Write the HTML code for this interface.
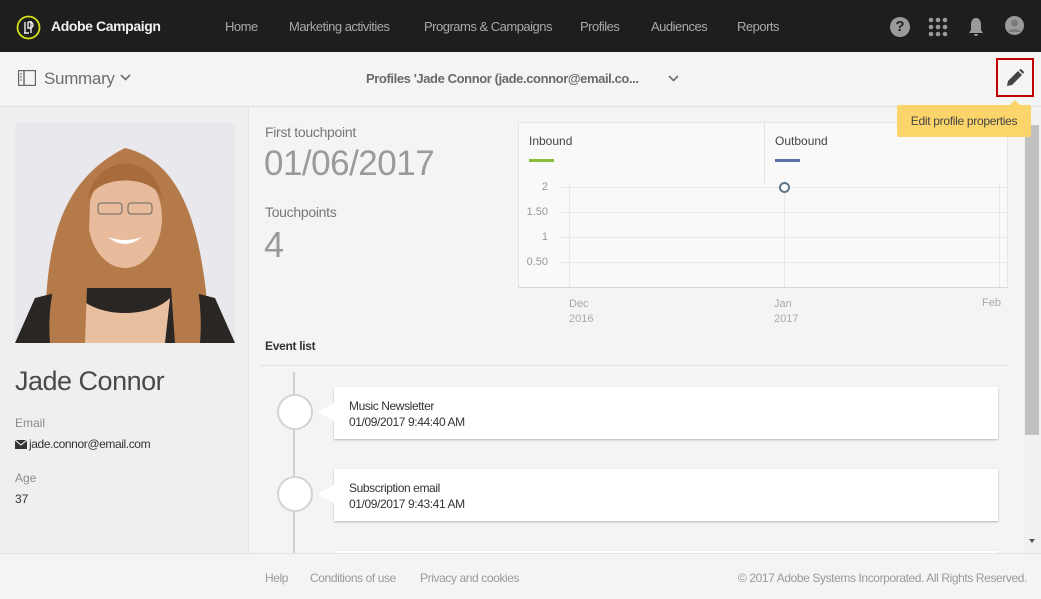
<!DOCTYPE html>
<html><head><meta charset="utf-8"><style>
*{margin:0;padding:0;box-sizing:border-box}
body{width:1041px;height:599px;overflow:hidden;font-family:"Liberation Sans",sans-serif;background:#f4f4f4;position:relative;color:#4b4b4b}
.a{position:absolute;white-space:nowrap}
.top{left:0;top:0;width:1041px;height:52px;background:#1e1e1e}
.nav{top:19px;font-size:13px;color:#a9a9a9;letter-spacing:-0.5px}
.sub{left:0;top:52px;width:1041px;height:55px;background:#f4f4f4;border-bottom:1px solid #e1e1e1}
.left{left:0;top:107px;width:249px;height:446px;background:#efefef;border-right:1px solid #e3e3e3}
.card{background:#fff;box-shadow:0 1px 2px rgba(0,0,0,.25)}
.grid{background:#e8e8e8}
.f{font-size:12px;color:#9a9a9a;letter-spacing:-0.4px;top:571px}
</style></head><body>
<div class="a top"></div>
<svg class="a" style="left:16px;top:15px" width="25" height="25" viewBox="0 0 25 25"><circle cx="12.5" cy="12.5" r="11" fill="none" stroke="#d4e21a" stroke-width="1.8"/><path d="M9 7v11M12 7h2a3 3 0 0 1 0 6h-2v-6M15 6v12M8 18h5" stroke="#eee" stroke-width="1.4" fill="none"/></svg>
<div class="a" style="left:51px;top:18px;font-size:14px;font-weight:bold;color:#f0f0f0;letter-spacing:-0.4px">Adobe Campaign</div>
<div class="a nav" style="left:225px">Home</div>
<div class="a nav" style="left:289px">Marketing activities</div>
<div class="a nav" style="left:424px">Programs &amp; Campaigns</div>
<div class="a nav" style="left:580px">Profiles</div>
<div class="a nav" style="left:651px">Audiences</div>
<div class="a nav" style="left:737px">Reports</div>
<div class="a" style="left:890px;top:17px;width:20px;height:20px;border-radius:50%;background:#9a9a9a;color:#1e1e1e;font-weight:bold;font-size:15px;text-align:center;line-height:20px">?</div>
<svg class="a" style="left:928px;top:17px" width="20" height="20"><g fill="#9a9a9a"><circle cx="3" cy="3" r="2.3"/><circle cx="10" cy="3" r="2.3"/><circle cx="17" cy="3" r="2.3"/><circle cx="3" cy="10" r="2.3"/><circle cx="10" cy="10" r="2.3"/><circle cx="17" cy="10" r="2.3"/><circle cx="3" cy="17" r="2.3"/><circle cx="10" cy="17" r="2.3"/><circle cx="17" cy="17" r="2.3"/></g></svg>
<svg class="a" style="left:967px;top:16px" width="18" height="21"><path d="M9 2c-4 0-5 4-5 7v5l-2 3h14l-2-3V9c0-3-1-7-5-7z M7 18a2 2 0 0 0 4 0z" fill="#9a9a9a"/></svg>
<svg class="a" style="left:1005px;top:16px" width="19" height="19"><circle cx="9.5" cy="9.5" r="9.5" fill="#9a9a9a"/><circle cx="9.5" cy="7" r="3.5" fill="#7a7a7a"/><path d="M3 16c2-4 11-4 13 0" fill="#7a7a7a"/></svg>

<div class="a sub"></div>
<svg class="a" style="left:18px;top:70px" width="18" height="16"><rect x="0.5" y="0.5" width="17" height="15" fill="none" stroke="#666" stroke-width="1.4"/><line x1="6" y1="1" x2="6" y2="15" stroke="#666" stroke-width="1.4"/><path d="M2 4h2M2 7h2M2 10h2" stroke="#666"/></svg>
<div class="a" style="left:44px;top:69px;font-size:17px;color:#6e6e6e;letter-spacing:-0.3px">Summary</div>
<svg class="a" style="left:120px;top:74px" width="11" height="8"><path d="M1 1l4.5 4.5L10 1" stroke="#6e6e6e" stroke-width="1.6" fill="none"/></svg>
<div class="a" style="left:366px;top:71px;font-size:13px;font-weight:bold;color:#6a6a6a;letter-spacing:-0.4px">Profiles 'Jade Connor (jade.connor@email.co...</div>
<svg class="a" style="left:668px;top:75px" width="11" height="8"><path d="M1 1l4.5 4.5L10 1" stroke="#6e6e6e" stroke-width="1.6" fill="none"/></svg>
<div class="a" style="left:996px;top:58px;width:38px;height:39px;border:2px solid #c00000;background:#f4f4f4"></div>
<svg class="a" style="left:1005px;top:68px" width="20" height="20"><path d="M2 18l1-5L13 3l4 4L7 17z" fill="#444"/><path d="M14 2l2-1 3 3-1 2z" fill="#444"/></svg>

<div class="a left"></div>
<div class="a" style="left:15px;top:123px;width:220px;height:220px;background:#ececef;overflow:hidden">
<svg width="220" height="220"><rect width="220" height="220" fill="#e9e8ec"/><path d="M30 220c0-90 10-160 80-195 65 15 80 100 85 195z" fill="#b47a4a"/><path d="M0 220l20-45 40-10 100 0 40 10 20 45z" fill="#2a2624"/><path d="M65 175c20 20 70 20 90 0l-5 45H70z" fill="#e8c0a0"/><ellipse cx="110" cy="95" rx="37" ry="50" fill="#e7bb9b"/><path d="M72 80c5-50 70-55 76 0c-5-30-70-30-76 0z" fill="#a86c3c"/><rect x="83" y="80" width="24" height="11" rx="3" fill="none" stroke="#666"/><rect x="113" y="80" width="24" height="11" rx="3" fill="none" stroke="#666"/><path d="M93 114q17 14 34 0q-17 6-34 0z" fill="#fff"/><path d="M35 220c-5-60 20-110 40-140l-5 140zM185 220c5-60-15-110-35-140l10 140z" fill="#b47a4a"/></svg></div>
<div class="a" style="left:15px;top:366px;font-size:27px;color:#4a4a4a;letter-spacing:-0.5px">Jade Connor</div>
<div class="a" style="left:15px;top:416px;font-size:12px;color:#8a8a8a">Email</div>
<svg class="a" style="left:15px;top:440px" width="12" height="9"><rect width="12" height="9" fill="#333"/><path d="M0 0l6 5 6-5" stroke="#fff" fill="none"/></svg>
<div class="a" style="left:29px;top:437px;font-size:12px;color:#333;letter-spacing:-0.4px">jade.connor@email.com</div>
<div class="a" style="left:15px;top:471px;font-size:12px;color:#8a8a8a">Age</div>
<div class="a" style="left:15px;top:492px;font-size:12px;color:#333">37</div>

<div class="a" style="left:265px;top:124px;font-size:14px;color:#777;letter-spacing:-0.3px">First touchpoint</div>
<div class="a" style="left:264px;top:144px;font-size:35px;color:#9a9a9a;letter-spacing:-0.5px">01/06/2017</div>
<div class="a" style="left:265px;top:204px;font-size:14px;color:#777;letter-spacing:-0.3px">Touchpoints</div>
<div class="a" style="left:264px;top:224px;font-size:36px;color:#9a9a9a">4</div>

<div class="a" style="left:518px;top:122px;width:490px;height:166px;background:#f9f9f9;border:1px solid #e5e5e5;border-bottom:1px solid #d8d8d8"></div>
<div class="a" style="left:764px;top:123px;width:1px;height:60px;background:#e3e3e3"></div>
<div class="a" style="left:529px;top:134px;font-size:12px;color:#444">Inbound</div>
<div class="a" style="left:529px;top:159px;width:25px;height:3px;background:#8bbd3c"></div>
<div class="a" style="left:775px;top:134px;font-size:12px;color:#444">Outbound</div>
<div class="a" style="left:775px;top:159px;width:25px;height:3px;background:#5a6ea8"></div>
<div class="a grid" style="left:560px;top:187px;width:448px;height:1px"></div>
<div class="a grid" style="left:560px;top:212px;width:448px;height:1px"></div>
<div class="a grid" style="left:560px;top:237px;width:448px;height:1px"></div>
<div class="a grid" style="left:560px;top:262px;width:448px;height:1px"></div>
<div class="a grid" style="left:569px;top:183px;width:1px;height:104px"></div>
<div class="a grid" style="left:784px;top:183px;width:1px;height:104px"></div>
<div class="a grid" style="left:999px;top:183px;width:1px;height:104px"></div>
<div class="a" style="left:779px;top:182px;width:11px;height:11px;border-radius:50%;border:2px solid #5f7689;background:#fff"></div>
<div class="a" style="left:528px;top:181px;width:20px;text-align:right;font-size:11px;color:#999">2</div>
<div class="a" style="left:518px;top:206px;width:30px;text-align:right;font-size:11px;color:#999">1.50</div>
<div class="a" style="left:528px;top:231px;width:20px;text-align:right;font-size:11px;color:#999">1</div>
<div class="a" style="left:518px;top:256px;width:30px;text-align:right;font-size:11px;color:#999">0.50</div>
<div class="a" style="left:569px;top:297px;font-size:11px;color:#aaa;line-height:15px">Dec<br>2016</div>
<div class="a" style="left:774px;top:297px;font-size:11px;color:#aaa;line-height:15px">Jan<br>2017</div>
<div class="a" style="left:982px;top:297px;font-size:11px;color:#aaa">Feb</div>

<div class="a" style="left:265px;top:339px;font-size:12px;font-weight:bold;color:#333;letter-spacing:-0.3px">Event list</div>
<div class="a" style="left:260px;top:365px;width:748px;height:1px;background:#e3e3e3"></div>
<div class="a" style="left:293px;top:372px;width:2px;height:181px;background:#d0d0d0"></div>
<div class="a" style="left:277px;top:394px;width:36px;height:36px;border-radius:50%;border:2px solid #d3d3d3;background:#fff"></div>
<div class="a" style="left:277px;top:476px;width:36px;height:36px;border-radius:50%;border:2px solid #d3d3d3;background:#fff"></div>
<div class="a card" style="left:334px;top:387px;width:664px;height:52px"></div>
<div class="a" style="left:318px;top:403px;width:0;height:0;border:9px solid transparent;border-right:16px solid #fff;border-left:0"></div>
<div class="a" style="left:349px;top:398px;font-size:12px;color:#333;line-height:16px;letter-spacing:-0.4px">Music Newsletter<br>01/09/2017 9:44:40 AM</div>
<div class="a card" style="left:334px;top:469px;width:664px;height:52px"></div>
<div class="a" style="left:318px;top:485px;width:0;height:0;border:9px solid transparent;border-right:16px solid #fff;border-left:0"></div>
<div class="a" style="left:349px;top:480px;font-size:12px;color:#333;line-height:16px;letter-spacing:-0.4px">Subscription email<br>01/09/2017 9:43:41 AM</div>
<div class="a card" style="left:334px;top:551px;width:664px;height:10px"></div>

<div class="a" style="left:1024px;top:110px;width:17px;height:443px;background:#f1f1f1"></div>
<div class="a" style="left:1025px;top:125px;width:14px;height:310px;background:#c1c1c1"></div>
<div class="a" style="left:1029px;top:539px;width:0;height:0;border:3px solid transparent;border-top:4px solid #555;border-bottom:0"></div>

<div class="a" style="left:897px;top:105px;width:134px;height:32px;background:#fbd46a;border-radius:2px;font-size:12px;color:#444;line-height:32px;text-align:center;letter-spacing:-0.3px">Edit profile properties</div>
<div class="a" style="left:1010px;top:100px;width:0;height:0;border:5px solid transparent;border-bottom-color:#fbd46a;border-top:0"></div>

<div class="a" style="left:0;top:553px;width:1041px;height:46px;background:#f4f4f4;border-top:1px solid #e3e3e3"></div>
<div class="a f" style="left:265px">Help</div>
<div class="a f" style="left:310px">Conditions of use</div>
<div class="a f" style="left:420px">Privacy and cookies</div>
<div class="a f" style="left:697px;width:330px;text-align:right">© 2017 Adobe Systems Incorporated. All Rights Reserved.</div>
</body></html>
